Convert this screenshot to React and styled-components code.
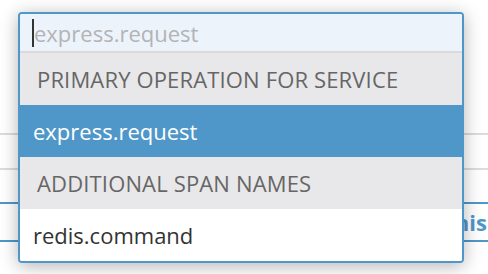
import { createGlobalStyle, styled } from "styled-components";

const GlobalStyle = createGlobalStyle`
  html, body {
    margin: 0;
    padding: 0;
    background: #ffffff;
    font-family: "Open Sans", "Liberation Sans", sans-serif;
  }
`;

const Page = styled.div`
  position: relative;
  width: 488px;
  height: 274px;
  overflow: hidden;
  background: #ffffff;
`;

const Table = styled.div`
  display: flex;
  flex-direction: column;
  padding-top: 133px;
`;

const TableRow = styled.div`
  height: ${(p) => p.$h}px;
  border-top: ${(p) => (p.$blue ? "2px solid #4f97c8" : "2px solid #dcdcdc")};
  display: flex;
  align-items: center;
  padding-left: 442px;
  box-sizing: border-box;
`;

const LinkText = styled.span`
  color: #4f97c8;
  font-weight: 700;
  font-size: 22px;
  white-space: nowrap;
`;

const Menu = styled.div`
  position: absolute;
  left: 18px;
  top: 12px;
  width: 446px;
  box-sizing: border-box;
  border: 2px solid #4f97c8;
  border-radius: 4px;
  background: #ffffff;
  box-shadow: 0 3px 18px rgba(0, 0, 0, 0.3);
  overflow: hidden;
`;

const Search = styled.div`
  height: 37px;
  background: #ecf3fa;
  border-bottom: 2px solid #dadadd;
  display: flex;
  align-items: center;
  padding-left: 12px;
`;

const Caret = styled.span`
  width: 2px;
  height: 28px;
  background: #333;
`;

const Placeholder = styled.span`
  color: #b3b3b6;
  font-size: 22px;
`;

const GroupLabel = styled.div`
  height: 52px;
  background: #e8e8ea;
  color: #666666;
  font-size: 22px;
  letter-spacing: 0.15px;
  display: flex;
  align-items: center;
  padding-left: 17px;
`;

const Option = styled.div`
  height: 52px;
  background: ${(p) => (p.$selected ? "#4f97c8" : "#ffffff")};
  color: ${(p) => (p.$selected ? "#ffffff" : "#333333")};
  font-size: 22px;
  display: flex;
  align-items: center;
  padding-left: 13px;
`;

const App = () => {
  return (
    <>
      <GlobalStyle />
      <Page>
        <Table>
          <TableRow $h={35} />
          <TableRow $h={34} />
          <TableRow $h={38} $blue>
            <LinkText>This</LinkText>
          </TableRow>
          <TableRow $h={34} $blue />
        </Table>
        <Menu>
          <Search>
            <Caret />
            <Placeholder>express.request</Placeholder>
          </Search>
          <GroupLabel>PRIMARY OPERATION FOR SERVICE</GroupLabel>
          <Option $selected>express.request</Option>
          <GroupLabel>ADDITIONAL SPAN NAMES</GroupLabel>
          <Option>redis.command</Option>
        </Menu>
      </Page>
    </>
  );
};

export default App;
